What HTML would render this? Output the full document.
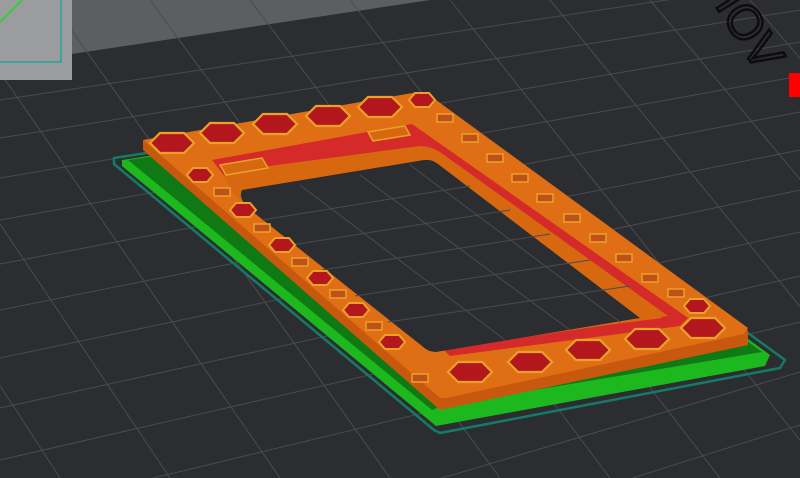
<!DOCTYPE html>
<html><head><style>
html,body{margin:0;padding:0;background:#2c2d31;overflow:hidden;width:800px;height:478px}
svg{display:block;overflow:hidden}
</style></head><body>
<svg width="800" height="478" viewBox="0 0 800 478" xmlns="http://www.w3.org/2000/svg">
<defs>
<polygon id="hx" points="-22,0 -12,-10 12,-10 22,0 12,10 -12,10" fill="#b3171d" stroke="#e8a22a" stroke-width="2.2"/>
<polygon id="sh" points="-13,0 -7,-7 7,-7 13,0 7,7 -7,7" fill="#b3171d" stroke="#e8a22a" stroke-width="2"/>
<rect id="sr" x="-8" y="-4" width="16" height="8" fill="#c0501a" stroke="#e8a22a" stroke-width="1.5"/>
</defs>
<rect width="800" height="478" fill="#2c2d31"/>
<polygon points="0,0 430,0 72,54 0,64" fill="#5d5e62"/>
<g stroke="#4a4b50" stroke-width="1" fill="none">
<path d="M0,100 L800,-20 M0,138 L800,10 M0,178 L800,42 M0,220 L800,76 M0,264 L800,112 M0,310 L800,150 M0,358 L800,190 M0,408 L800,232 M0,460 L800,276 M0,515 L800,322 M300,520 L800,372 M500,520 L800,425"/>
<path d="M-350,0 L0,300 M-250,0 L60,478 M-150,0 L170,478 M-50,0 L280,478 M50,0 L390,478 M150,0 L500,478 M250,0 L610,478 M350,0 L720,478 M450,0 L830,478 M550,0 L940,478 M650,0 L1050,478 M750,0 L1160,478 M-450,0 L-50,478"/>
</g>
<rect x="0" y="0" width="72" height="80" fill="#9b9c9e"/>
<polyline points="0,62 61,62 61,0" fill="none" stroke="#1fa59a" stroke-width="1.5"/>
<line x1="0" y1="22" x2="22" y2="0" stroke="#2fd13a" stroke-width="2"/>
<text x="0" y="0" transform="translate(758,74) rotate(-122) scale(1,-1)" font-family="Liberation Sans, sans-serif" font-size="48" fill="none" stroke="#0d0d0f" stroke-width="2.5">VORON</text>
<rect x="789" y="73" width="11" height="24" fill="#f00"/>
<polygon points="114,158 440,108 785,360 780,368 440,433 434,430 114,164" fill="none" stroke="#167a66" stroke-width="2.5" stroke-linejoin="round"/>
<polygon points="122,160 440,112 770,355 765,366 436,426 122,166" fill="#1db81d"/>
<polygon points="128,160 440,115 762,352 445,405 432,410" fill="#0f7a14"/>
<polygon points="143,140 143,150 440,410 748,345 748,330 440,397" fill="#c8580e"/>
<polygon points="143,140 418,92 432,97 748,328 744,334 446,398 440,398" fill="#e06e14"/>
<polygon points="212,160 412,124 688,318 680,326 450,356 440,346 662,318 420,150 226,178" fill="#d42a2a"/>
<path d="M224,172 L420,146 Q430,146 440,152 L668,316 L438,350 Q428,350 424,342 L236,196 Q226,186 224,172 Z" fill="#d8680f"/>
<path d="M242,190 L424,160 Q432,159 438,164 L640,318 L436,352 Q428,352 422,346 L248,208 Q238,198 242,190 Z" fill="#2c2d31"/>
<g stroke="#4a4b50" stroke-width="1">
<path d="M262,220 L470,186 M292,245 L510,210 M322,270 L550,234 M355,296 L590,260 M388,322 L630,286 M300,185 L505,340 M360,175 L570,330 M410,165 L620,322"/>
</g>
<use href="#hx" transform="translate(172,143)"/>
<use href="#hx" transform="translate(222,133)"/>
<use href="#hx" transform="translate(275,124)"/>
<use href="#hx" transform="translate(328,116)"/>
<use href="#hx" transform="translate(380,107)"/>
<use href="#sh" transform="translate(422,100)"/>
<use href="#sh" transform="translate(200,175)"/>
<use href="#sh" transform="translate(243,210)"/>
<use href="#sh" transform="translate(282,245)"/>
<use href="#sh" transform="translate(320,278)"/>
<use href="#sh" transform="translate(356,310)"/>
<use href="#sh" transform="translate(392,342)"/>
<use href="#sr" transform="translate(222,192)"/>
<use href="#sr" transform="translate(262,228)"/>
<use href="#sr" transform="translate(300,262)"/>
<use href="#sr" transform="translate(338,294)"/>
<use href="#sr" transform="translate(374,326)"/>
<use href="#sr" transform="translate(420,378)"/>
<use href="#hx" transform="translate(470,372)"/>
<use href="#hx" transform="translate(530,362)"/>
<use href="#hx" transform="translate(588,350)"/>
<use href="#hx" transform="translate(647,339)"/>
<use href="#hx" transform="translate(703,328)"/>
<use href="#sh" transform="translate(697,306)"/>
<use href="#sr" transform="translate(445,118)"/>
<use href="#sr" transform="translate(470,138)"/>
<use href="#sr" transform="translate(495,158)"/>
<use href="#sr" transform="translate(520,178)"/>
<use href="#sr" transform="translate(545,198)"/>
<use href="#sr" transform="translate(572,218)"/>
<use href="#sr" transform="translate(598,238)"/>
<use href="#sr" transform="translate(624,258)"/>
<use href="#sr" transform="translate(650,278)"/>
<use href="#sr" transform="translate(676,293)"/>
<polygon points="220,165 262,158 268,168 226,175" fill="#d8680f" stroke="#e8a22a" stroke-width="1.5"/>
<polygon points="368,132 405,126 410,135 373,141" fill="#d8680f" stroke="#e8a22a" stroke-width="1.5"/>
</svg>
</body></html>
